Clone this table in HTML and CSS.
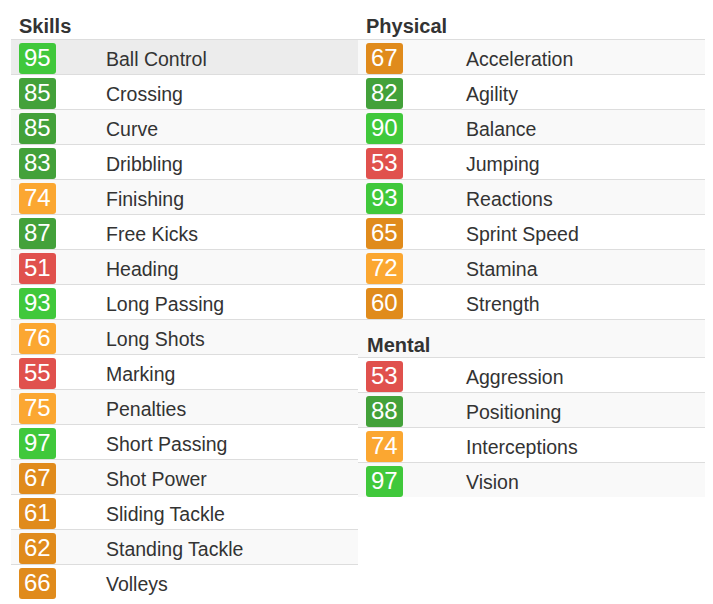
FILE: index.html
```html
<!DOCTYPE html>
<html>
<head>
<meta charset="utf-8">
<link rel="stylesheet" href="styles.css">
</head>
<body>
<div class="page">
  <section class="col col-skills">
    <h3 class="head">Skills</h3>
    <div class="row hover"><span class="badge r90">95</span><span class="name">Ball Control</span></div>
    <div class="row"><span class="badge r80">85</span><span class="name">Crossing</span></div>
    <div class="row odd"><span class="badge r80">85</span><span class="name">Curve</span></div>
    <div class="row"><span class="badge r80">83</span><span class="name">Dribbling</span></div>
    <div class="row odd"><span class="badge r70">74</span><span class="name">Finishing</span></div>
    <div class="row"><span class="badge r80">87</span><span class="name">Free Kicks</span></div>
    <div class="row odd"><span class="badge r50">51</span><span class="name">Heading</span></div>
    <div class="row"><span class="badge r90">93</span><span class="name">Long Passing</span></div>
    <div class="row odd"><span class="badge r70">76</span><span class="name">Long Shots</span></div>
    <div class="row"><span class="badge r50">55</span><span class="name">Marking</span></div>
    <div class="row odd"><span class="badge r70">75</span><span class="name">Penalties</span></div>
    <div class="row"><span class="badge r90">97</span><span class="name">Short Passing</span></div>
    <div class="row odd"><span class="badge r60">67</span><span class="name">Shot Power</span></div>
    <div class="row"><span class="badge r60">61</span><span class="name">Sliding Tackle</span></div>
    <div class="row odd"><span class="badge r60">62</span><span class="name">Standing Tackle</span></div>
    <div class="row"><span class="badge r60">66</span><span class="name">Volleys</span></div>
  </section>
  <section class="col col-phys">
    <h3 class="head">Physical</h3>
    <div class="row odd"><span class="badge r60">67</span><span class="name">Acceleration</span></div>
    <div class="row"><span class="badge r80">82</span><span class="name">Agility</span></div>
    <div class="row odd"><span class="badge r90">90</span><span class="name">Balance</span></div>
    <div class="row"><span class="badge r50">53</span><span class="name">Jumping</span></div>
    <div class="row odd"><span class="badge r90">93</span><span class="name">Reactions</span></div>
    <div class="row"><span class="badge r60">65</span><span class="name">Sprint Speed</span></div>
    <div class="row odd"><span class="badge r70">72</span><span class="name">Stamina</span></div>
    <div class="row"><span class="badge r60">60</span><span class="name">Strength</span></div>
    <h3 class="subhead odd">Mental</h3>
    <div class="row"><span class="badge r50">53</span><span class="name">Aggression</span></div>
    <div class="row odd"><span class="badge r80">88</span><span class="name">Positioning</span></div>
    <div class="row"><span class="badge r70">74</span><span class="name">Interceptions</span></div>
    <div class="row odd"><span class="badge r90">97</span><span class="name">Vision</span></div>
  </section>
</div>
</body>
</html>
```
FILE: styles.css
```css
html, body {
  margin: 0;
  padding: 0;
  background: #fff;
}
body {
  font-family: "Liberation Sans", Arial, Helvetica, sans-serif;
  color: #333;
}
.page {
  display: flex;
  align-items: flex-start;
  padding-left: 11px;
}
.col {
  width: 347px;
  display: flex;
  flex-direction: column;
}
.head {
  margin: 0;
  padding: 15px 8px 1px 8px;
  font-size: 20px;
  line-height: 23px;
  font-weight: bold;
  color: #333;
}
.subhead {
  margin: 0;
  padding: 14px 9px 0 9px;
  font-size: 20px;
  line-height: 23px;
  font-weight: bold;
  color: #333;
  border-top: 1px solid #ddd;
}
.row {
  display: flex;
  align-items: baseline;
  height: 34px;
  padding: 0 8px;
  border-top: 1px solid #ddd;
  box-sizing: content-box;
}
.odd {
  background: #f9f9f9;
}
.hover {
  background: #ececec;
}
.badge {
  box-sizing: border-box;
  margin-top: 3px;
  height: 31px;
  width: 37px;
  padding: 0 5px;
  border-radius: 3px;
  font-size: 24px;
  line-height: 29px;
  color: #fff;
  text-align: left;
  flex: none;
}
.name {
  font-size: 19.5px;
  line-height: 23px;
  color: #333;
}
.col-skills .badge {
  margin-right: 50px;
}
.col-phys .badge {
  margin-right: 63px;
}
.r90 { background: #40c83b; }
.r80 { background: #43a13a; }
.r70 { background: #fba731; }
.r60 { background: #e08b1c; }
.r50 { background: #e0514d; }
```
